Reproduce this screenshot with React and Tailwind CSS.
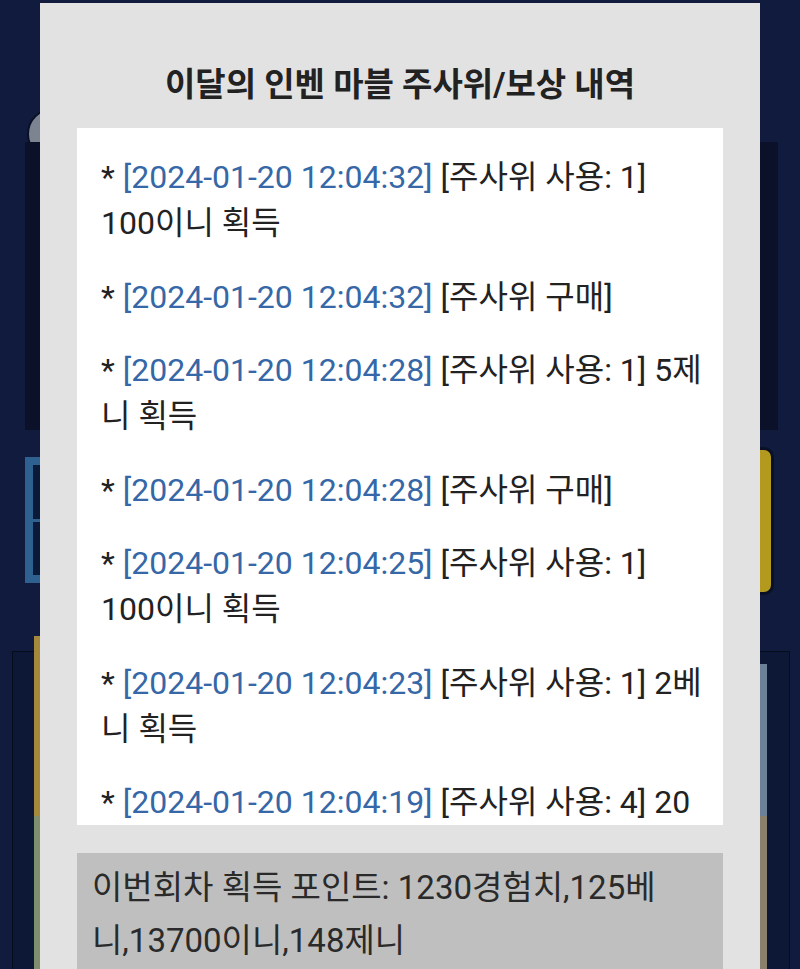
import React from "react";

const entries = [
  { date: "2024-01-20 12:04:32", lines: ["[주사위 사용: 1]", "100이니 획득"] },
  { date: "2024-01-20 12:04:32", lines: ["[주사위 구매]"] },
  { date: "2024-01-20 12:04:28", lines: ["[주사위 사용: 1] 5제", "니 획득"] },
  { date: "2024-01-20 12:04:28", lines: ["[주사위 구매]"] },
  { date: "2024-01-20 12:04:25", lines: ["[주사위 사용: 1]", "100이니 획득"] },
  { date: "2024-01-20 12:04:23", lines: ["[주사위 사용: 1] 2베", "니 획득"] },
  { date: "2024-01-20 12:04:19", lines: ["[주사위 사용: 4] 20"] },
];

// page content that sits behind the popup
function Backdrop() {
  return (
    <div className="absolute inset-0 overflow-hidden bg-[#101b3e]">
      <div className="absolute left-[27px] top-[108px] h-[52px] w-[52px] rounded-full border-2 border-[#0a1026] bg-[#7c8491]" />
      <div className="absolute left-[25px] top-[142px] h-[288px] w-[40px] bg-[#0b1129]" />
      <div className="absolute left-[745px] top-[142px] h-[288px] w-[33px] bg-[#0b1129]" />
      <div className="absolute left-[25px] top-[457px] flex h-[126px] w-[40px] flex-col gap-[3px] border-[8px] border-r-0 border-[#2f6190] bg-[#2f6190]">
        <div className="flex-1 bg-[#0c1a3a]" />
        <div className="flex-1 bg-[#0c1a3a]" />
      </div>
      <div className="absolute left-[740px] top-[447px] h-[148px] w-[34px] rounded-[10px] border-[3px] border-[#0a1026] bg-[#b39a1f]" />
      <div className="absolute left-[12px] top-[651px] h-[330px] w-[40px] border border-[#070c1d] bg-[#0d1736]" />
      <div className="absolute left-[34px] top-[636px] h-[180px] w-[10px] bg-[#a4893c]" />
      <div className="absolute left-[34px] top-[816px] h-[160px] w-[10px] bg-[#7f8f6d]" />
      <div className="absolute left-[750px] top-[651px] h-[330px] w-[40px] border border-[#070c1d] bg-[#0d1736]" />
      <div className="absolute left-[755px] top-[664px] h-[152px] w-[12px] bg-[#6c8197]" />
      <div className="absolute left-[755px] top-[816px] h-[160px] w-[12px] bg-[#8b806b]" />
    </div>
  );
}

export default function App() {
  return (
    <div
      className="relative h-[969px] w-full overflow-hidden"
      style={{ fontFamily: "Roboto, 'Noto Sans CJK KR', sans-serif" }}
    >
      <Backdrop />

      <div className="relative mx-[40px] mt-[3px] flex h-[966px] flex-col bg-[#e2e2e2] px-[37px] pt-[62px]">
        <h1 className="text-center text-[33px] font-bold leading-[40px] text-[#222]">
          이달의 인벤 마블 주사위/보상 내역
        </h1>

        <div className="mt-[23px] h-[697px] shrink-0 overflow-hidden bg-white px-[24px] pt-[26px]">
          {entries.map((e, i) => (
            <div key={i} className="mb-[27.5px] text-[32px] leading-[46px] text-[#222]">
              <div className="whitespace-nowrap">
                * <span className="text-[#3667a7]">[{e.date}]</span> {e.lines[0]}
              </div>
              {e.lines[1] && <div className="whitespace-nowrap">{e.lines[1]}</div>}
            </div>
          ))}
        </div>

        <div className="mt-[28px] bg-[#bfbfbf] px-[15px] pt-[8px] pb-[20px] text-[33px] leading-[53px] text-[#2a2a2a]">
          <div className="whitespace-nowrap">이번회차 획득 포인트: 1230경험치,125베</div>
          <div className="whitespace-nowrap">니,13700이니,148제니</div>
        </div>
      </div>
    </div>
  );
}
